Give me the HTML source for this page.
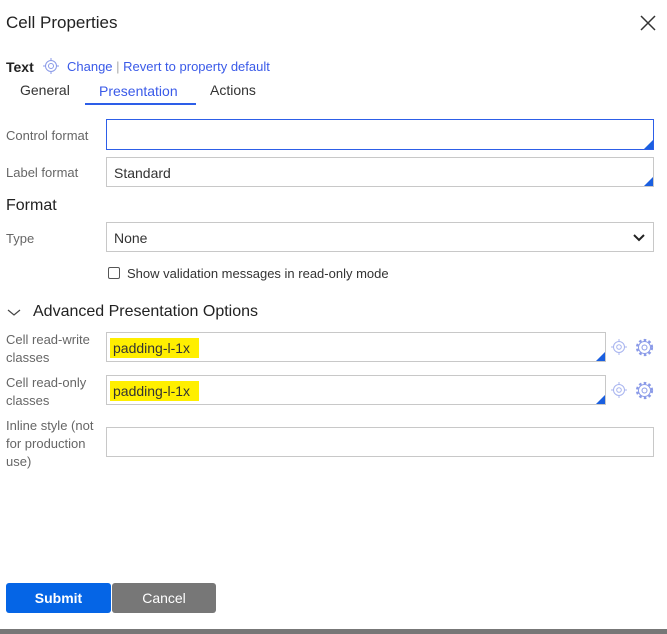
<!DOCTYPE html><html><head><style>
body{margin:0;width:667px;height:634px;background:#fff;position:relative;font-family:"Liberation Sans",sans-serif;overflow:hidden;color:#333}
.a{position:absolute;white-space:nowrap}
.lbl{font-size:13px;color:#666;line-height:18px}
.in{position:absolute;border:1px solid #c8c8c8;box-sizing:border-box;background:#fff;font-size:14px;color:#333;padding-left:7px;line-height:30px}
.tri{position:absolute;right:0;bottom:0;width:0;height:0;border-left:9px solid transparent;border-bottom:9px solid #1a5fe0}
.hl{background:#ffef00;padding:2px 9px 2px 3px;margin-left:-4px}
</style></head><body>
<div class="a" style="left:6px;top:13px;font-size:17px;color:#222">Cell Properties</div>
<svg class="a" style="left:640px;top:15px" width="16" height="16"><path d="M1 1L15 15M15 1L1 15" stroke="#333" stroke-width="1.5"/></svg>
<div class="a" style="left:6px;top:59px;font-size:14px;font-weight:bold;color:#222">Text</div>
<svg class="a" style="left:43px;top:58px" width="16" height="16"><circle cx="8" cy="8" r="5.5" fill="none" stroke="#8a9ae8"/><circle cx="8" cy="8" r="2.5" fill="none" stroke="#8a9ae8"/><path d="M8 0v2M8 14v2M0 8h2M14 8h2" stroke="#8a9ae8"/></svg>
<div class="a" style="left:67px;top:59px;font-size:13px;color:#3a5ae8">Change <span style="color:#aaa">|</span> Revert to property default</div>
<div class="a" style="left:20px;top:82px;font-size:14px;color:#333">General</div>
<div class="a" style="left:99px;top:83px;font-size:14px;color:#3a5ae8">Presentation</div>
<div class="a" style="left:85px;top:103px;width:111px;height:2px;background:#2d5ee8"></div>
<div class="a" style="left:210px;top:82px;font-size:14px;color:#333">Actions</div>
<div class="a lbl" style="left:6px;top:127px">Control format</div>
<div class="in" style="left:106px;top:119px;width:548px;height:31px;border-color:#2d5ee8"><div class="tri"></div></div>
<div class="a lbl" style="left:6px;top:164px">Label format</div>
<div class="in" style="left:106px;top:157px;width:548px;height:30px">Standard<div class="tri"></div></div>
<div class="a" style="left:6px;top:197px;font-size:16px;color:#222">Format</div>
<div class="a lbl" style="left:6px;top:230px">Type</div>
<div class="in" style="left:106px;top:222px;width:548px;height:30px">None<svg style="position:absolute;right:8px;top:11px" width="12" height="8"><path d="M1 1l5 5 5-5" fill="none" stroke="#222" stroke-width="2"/></svg></div>
<div class="a" style="left:108px;top:267px;width:12px;height:12px;border:1px solid #555;box-sizing:border-box;border-radius:2px"></div>
<div class="a" style="left:127px;top:266px;font-size:13px;color:#333">Show validation messages in read-only mode</div>
<svg class="a" style="left:7px;top:308px" width="14" height="10"><path d="M1 2l6 5 6-5" fill="none" stroke="#444" stroke-width="1.2"/></svg>
<div class="a" style="left:33px;top:303px;font-size:16px;color:#222">Advanced Presentation Options</div>
<div class="a lbl" style="left:6px;top:331px">Cell read-write<br>classes</div>
<div class="in" style="left:106px;top:332px;width:500px;height:30px"><span class="hl">padding-l-1x</span><div class="tri"></div></div>
<div class="a lbl" style="left:6px;top:374px">Cell read-only<br>classes</div>
<div class="in" style="left:106px;top:375px;width:500px;height:30px"><span class="hl">padding-l-1x</span><div class="tri"></div></div>
<svg class="a" style="left:610px;top:338px" width="18" height="18"><circle cx="9" cy="9" r="5.5" fill="none" stroke="#a8b4ef"/><circle cx="9" cy="9" r="2.3" fill="none" stroke="#a8b4ef"/><path d="M9 1v2.5M9 14.5v2.5M1 9h2.5M14.5 9h2.5" stroke="#a8b4ef"/></svg>
<svg class="a" style="left:634px;top:337px" width="21" height="21"><circle cx="10.5" cy="10.5" r="7.5" fill="none" stroke="#8a9ae8" stroke-width="2.2" stroke-dasharray="2.6 2.3"/><circle cx="10.5" cy="10.5" r="6" fill="none" stroke="#8a9ae8"/><circle cx="10.5" cy="10.5" r="2.5" fill="none" stroke="#8a9ae8"/></svg>
<svg class="a" style="left:610px;top:381px" width="18" height="18"><circle cx="9" cy="9" r="5.5" fill="none" stroke="#a8b4ef"/><circle cx="9" cy="9" r="2.3" fill="none" stroke="#a8b4ef"/><path d="M9 1v2.5M9 14.5v2.5M1 9h2.5M14.5 9h2.5" stroke="#a8b4ef"/></svg>
<svg class="a" style="left:634px;top:380px" width="21" height="21"><circle cx="10.5" cy="10.5" r="7.5" fill="none" stroke="#8a9ae8" stroke-width="2.2" stroke-dasharray="2.6 2.3"/><circle cx="10.5" cy="10.5" r="6" fill="none" stroke="#8a9ae8"/><circle cx="10.5" cy="10.5" r="2.5" fill="none" stroke="#8a9ae8"/></svg>
<div class="a lbl" style="left:6px;top:417px">Inline style (not<br>for production<br>use)</div>
<div class="in" style="left:106px;top:427px;width:548px;height:30px"></div>
<div class="a" style="left:6px;top:583px;width:105px;height:30px;background:#0565e6;border-radius:3px;color:#fff;font-weight:bold;font-size:14px;text-align:center;line-height:30px">Submit</div>
<div class="a" style="left:112px;top:583px;width:104px;height:30px;background:#777;border-radius:3px;color:#fff;font-size:14px;text-align:center;line-height:30px">Cancel</div>
<div class="a" style="left:0;top:629px;width:667px;height:5px;background:#777"></div>
</body></html>
